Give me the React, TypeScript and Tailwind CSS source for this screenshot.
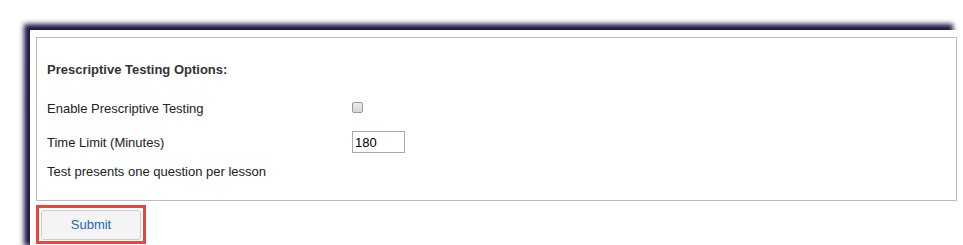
import React from "react";

export default function App() {
  return (
    <div className="w-[963px] h-[245px] overflow-hidden bg-white pl-[30px] pt-[30px] font-['Liberation_Sans',Arial,sans-serif] text-[13px] text-[#222]">
      <div className="w-[929px] h-[222px] bg-white shadow-[-6px_-6px_5px_#1c1746] pl-[6px] pt-[7px]">
        <div className="w-[921px] h-[164px] border border-[#bdbdbd] pl-[10px] pt-[24px] flex flex-col">
          <div className="h-[15px] leading-[15px] font-bold text-[#333]">Prescriptive Testing Options:</div>
          <div className="h-[22px] mt-[20px] flex items-center">
            <span className="w-[305px] leading-[15px]">Enable Prescriptive Testing</span>
            <input
              type="checkbox"
              className="appearance-none w-[11px] h-[11px] mt-[-1px] rounded-[2px] border border-[#9a9a9a] bg-gradient-to-b from-[#ececec] to-[#d6d6d6]"
            />
          </div>
          <div className="h-[22px] mt-[12px] flex items-center">
            <span className="w-[305px] leading-[15px]">Time Limit (Minutes)</span>
            <input
              type="text"
              defaultValue="180"
              className="w-[53px] h-[22px] border border-[#a9a9a9] px-[2px] text-[13px] text-black outline-none"
            />
          </div>
          <div className="h-[16px] mt-[11px] leading-[16px]">Test presents one question per lesson</div>
        </div>
        <div className="mt-[4px] w-[110px] h-[39px] border-[3px] border-[#e8473c] pl-[2px] pt-[2px]">
          <button className="w-[100px] h-[30px] rounded-[3px] border border-[#cccccc] bg-[#f4f4f4] text-[13px] text-[#1d63c0]">
            Submit
          </button>
        </div>
      </div>
    </div>
  );
}
